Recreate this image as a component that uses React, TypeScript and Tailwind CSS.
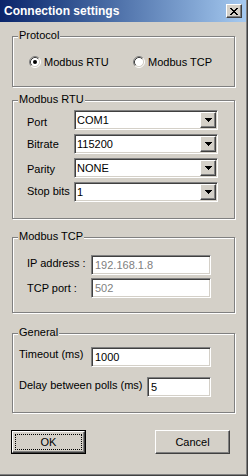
import React from "react";

const sunken =
  "border border-t-[#808080] border-l-[#808080] border-b-white border-r-white shadow-[inset_1px_1px_0_#404040,inset_-1px_-1px_0_#d4d0c8]";
const raised =
  "border border-t-white border-l-white border-b-[#404040] border-r-[#404040] shadow-[inset_-1px_-1px_0_#808080]";
const group =
  "relative ml-[12px] w-[223px] border border-[#808080] shadow-[inset_1px_1px_0_#fff,1px_1px_0_#fff]";

function Legend({ children }: { children: React.ReactNode }) {
  return (
    <span className="absolute left-[5px] top-[-8px] px-[1px] bg-[#d4d0c8] leading-[13px]">
      {children}
    </span>
  );
}

function Radio({ checked }: { checked?: boolean }) {
  return (
    <svg width="12" height="12" viewBox="0 0 12 12" className="shrink-0">
      <circle cx="6" cy="6" r="4.5" fill="#fff" />
      <path d="M2.11 9.89 A5.5 5.5 0 0 1 9.89 2.11" fill="none" stroke="#808080" strokeWidth="1" />
      <path d="M9.89 2.11 A5.5 5.5 0 0 1 2.11 9.89" fill="none" stroke="#fff" strokeWidth="1" />
      <path d="M2.82 9.18 A4.5 4.5 0 0 1 9.18 2.82" fill="none" stroke="#404040" strokeWidth="1" />
      <path d="M9.18 2.82 A4.5 4.5 0 0 1 2.82 9.18" fill="none" stroke="#d4d0c8" strokeWidth="1" />
      {checked && <circle cx="6" cy="6" r="2" fill="#000" />}
    </svg>
  );
}

function Combo({ value }: { value: string }) {
  return (
    <div className={`w-[144px] h-[20px] flex bg-white p-[1px] ${sunken}`}>
      <div className="flex-1 flex items-center pl-[1px]">{value}</div>
      <div className={`w-[16px] h-full bg-[#d4d0c8] flex items-center justify-center ${raised}`}>
        <svg width="7" height="4" viewBox="0 0 7 4">
          <path d="M0 0h7v1H0zM1 1h5v1H1zM2 2h3v1H2zM3 3h1v1H3z" fill="#000" />
        </svg>
      </div>
    </div>
  );
}

function Field({ value, width, disabled }: { value: string; width: string; disabled?: boolean }) {
  return (
    <div
      className={`${width} h-[20px] bg-white flex items-center pl-[3px] ${sunken} ${
        disabled ? "text-[#808080]" : "text-black"
      }`}
    >
      {value}
    </div>
  );
}

export default function App() {
  return (
    <div className="w-[248px] h-[476px] bg-[#d4d0c8] flex flex-col font-['Liberation_Sans',Arial,sans-serif] text-[11px] leading-[13px] text-black shadow-[inset_-1px_-1px_0_#404040,inset_-2px_-2px_0_#808080] overflow-hidden">
      {/* Title bar */}
      <div className="h-[22px] mr-[2px] flex items-center justify-between pl-[4px] pr-[4px] bg-linear-to-r from-[#0a246a] to-[#a6caf0]">
        <span className="text-white font-bold text-[12px]">Connection settings</span>
        <div className={`w-[16px] h-[14px] bg-[#d4d0c8] flex items-center justify-center ${raised}`}>
          <svg width="8" height="7" viewBox="0 0 8 7">
            <path d="M0 0h2v1H0zM6 0h2v1H6zM1 1h2v1H1zM5 1h2v1H5zM2 2h4v1H2zM3 3h2v1H3zM2 4h4v1H2zM1 5h2v1H1zM5 5h2v1H5zM0 6h2v1H0zM6 6h2v1H6z" fill="#000" />
          </svg>
        </div>
      </div>

      {/* Protocol */}
      <div className={`${group} mt-[14px] h-[51px]`}>
        <Legend>Protocol</Legend>
        <div className="mt-[19px] ml-[16px] flex items-center h-[12px]">
          <div className="w-[104px] flex items-center gap-[3px]">
            <Radio checked />
            <span>Modbus RTU</span>
          </div>
          <div className="flex items-center gap-[3px]">
            <Radio />
            <span>Modbus TCP</span>
          </div>
        </div>
      </div>

      {/* Modbus RTU */}
      <div className={`${group} mt-[13px] h-[119px]`}>
        <Legend>Modbus RTU</Legend>
        <div className="pt-[9px] pl-[14px] flex flex-col gap-[4px]">
          {[
            ["Port", "COM1", "pt-[6px]"],
            ["Bitrate", "115200", "pt-[4px]"],
            ["Parity", "NONE", "pt-[5px]"],
            ["Stop bits", "1", "pt-[3px]"],
          ].map(([label, value, pad]) => (
            <div key={label} className="flex h-[20px]">
              <span className={`w-[47px] ${pad}`}>{label}</span>
              <Combo value={value} />
            </div>
          ))}
        </div>
      </div>

      {/* Modbus TCP */}
      <div className={`${group} mt-[18px] h-[76px]`}>
        <Legend>Modbus TCP</Legend>
        <div className="pt-[17px] pl-[14px] flex flex-col gap-[3px]">
          <div className="flex items-center h-[20px]">
            <span className="w-[64px] -mt-[4px]">IP address :</span>
            <Field value="192.168.1.8" width="w-[120px]" disabled />
          </div>
          <div className="flex items-center h-[20px]">
            <span className="w-[64px]">TCP port :</span>
            <Field value="502" width="w-[120px]" disabled />
          </div>
        </div>
      </div>

      {/* General */}
      <div className={`${group} mt-[20px] h-[80px]`}>
        <Legend>General</Legend>
        <div className="pt-[13px] pl-[6px] flex flex-col gap-[10px]">
          <div className="flex items-center h-[20px]">
            <span className="w-[72px] -mt-[6px]">Timeout (ms)</span>
            <Field value="1000" width="w-[120px]" />
          </div>
          <div className="flex items-center h-[20px]">
            <span className="w-[128px] -mt-[4px]">Delay between polls (ms)</span>
            <Field value="5" width="w-[64px]" />
          </div>
        </div>
      </div>

      {/* Buttons */}
      <div className="mt-[17px] ml-[11px] flex gap-[69px]">
        <div className="w-[75px] h-[24px] border border-black">
          <div className={`w-full h-full p-[2px] ${raised}`}>
            <div className="w-full h-full border border-dotted border-black flex items-center justify-center">
              OK
            </div>
          </div>
        </div>
        <div className={`w-[75px] h-[24px] flex items-center justify-center ${raised}`}>Cancel</div>
      </div>
    </div>
  );
}
